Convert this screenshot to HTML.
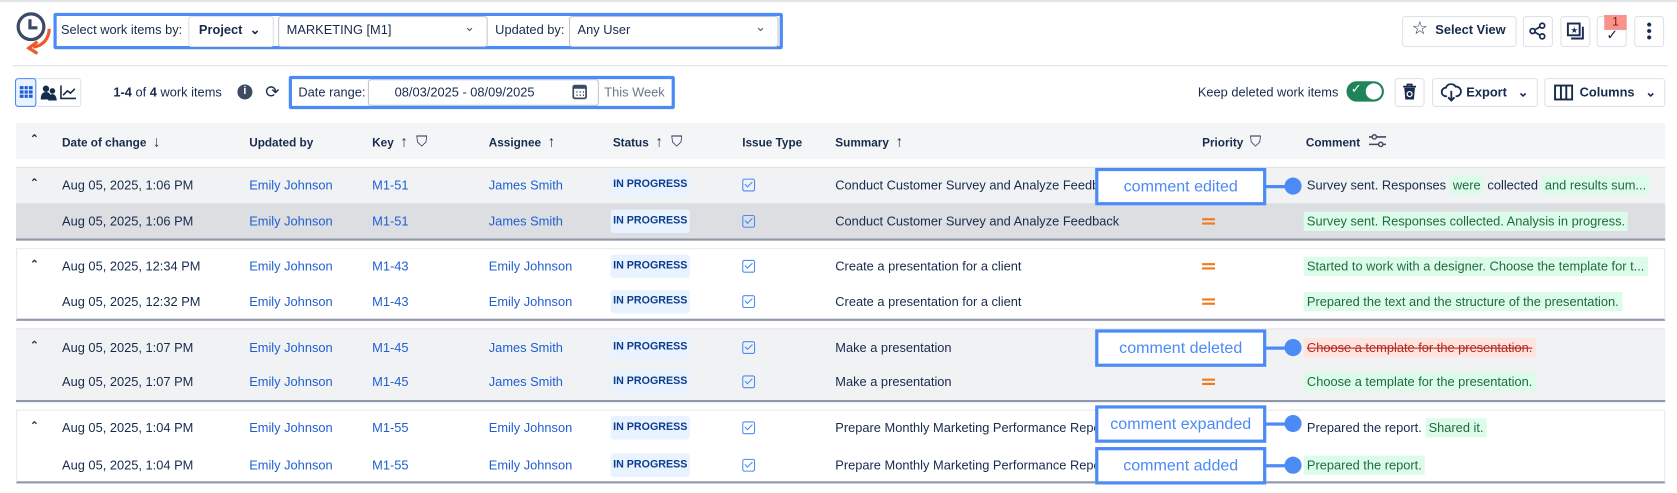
<!DOCTYPE html>
<html><head><meta charset="utf-8"><style>
*{box-sizing:border-box;margin:0;padding:0}
body{width:1677px;height:493px;background:#fff;font-family:"Liberation Sans",sans-serif;font-size:12px;color:#172b4d;position:relative;overflow:hidden}
#w{position:absolute;left:0;top:0;width:1568px;height:461px;transform:scale(1.0695);transform-origin:0 0}
.a{position:absolute;white-space:nowrap}
.btn{position:absolute;border:1px solid #dfe1e6;border-radius:3px;background:#fff}
.hdr{font-weight:bold;font-size:11px;color:#172b4d;line-height:16px}
.hdr span{font-size:14px;font-weight:normal;line-height:16px}
.lnk{color:#1f5fd1}
.st{position:absolute;background:#e9f2ff;color:#0c3d8c;font-weight:bold;font-size:10px;border-radius:3px;width:74px;height:22px;line-height:22px;text-align:center}
.cb{position:absolute;width:12px;height:12px;border:1.5px solid #4c8af5;border-radius:2px}
.cb:after{content:"";position:absolute;left:3px;top:0px;width:3px;height:6px;border:solid #4c8af5;border-width:0 1.5px 1.5px 0;transform:rotate(45deg)}
.pr{position:absolute;width:12px;height:6px;border-top:2px solid #f07a1c;border-bottom:2px solid #f07a1c}
.g{background:#dcfbea;color:#206b3e;padding:2px 3px}
.ann{position:absolute;left:1024px;width:160px;border:3px solid #4c8af5;background:#fff;color:#4c8af5;font-size:15px;text-align:center}
.ln{position:absolute;left:1183px;width:20px;height:3px;background:#4c8af5}
.dot{position:absolute;left:1201px;width:16px;height:16px;border-radius:50%;background:#4c8af5}
.chev{position:absolute;left:28px;font-size:10px;font-weight:bold;color:#333}
</style></head><body><div id="w">
<div class="a" style="left:0;top:0;width:1568px;height:2px;background:#e4e5e8"></div>
<svg class="a" style="left:13px;top:9px" width="36" height="46" viewBox="0 0 36 46"><circle cx="16" cy="16" r="12" fill="none" stroke="#3d4a63" stroke-width="3"/><path d="M15 9v8h7" fill="none" stroke="#3d4a63" stroke-width="3"/><path d="M33 18c0 9-6 16-15 17" fill="none" stroke="#ec5a2b" stroke-width="3"/><path d="M22 30l-8 6 8 5" fill="none" stroke="#ec5a2b" stroke-width="3"/></svg>
<div class="a" style="left:50px;top:12px;width:682px;height:34px;border:3px solid #4c8af5;border-radius:2px"></div>
<div class="a" style="left:57px;top:21px;font-size:12px">Select work items by:</div>
<div class="btn" style="left:176px;top:15px;width:80px;height:29px"></div>
<div class="a" style="left:186px;top:21px;font-weight:bold">Project &nbsp;⌄</div>
<div class="btn" style="left:260px;top:15px;width:196px;height:29px;border-color:#c1c7d0"></div>
<div class="a" style="left:268px;top:21px">MARKETING [M1]</div><div class="a" style="left:434px;top:18px;color:#555">⌄</div>
<div class="a" style="left:463px;top:21px">Updated by:</div>
<div class="btn" style="left:532px;top:15px;width:196px;height:29px;border-color:#c1c7d0"></div>
<div class="a" style="left:540px;top:21px">Any User</div><div class="a" style="left:706px;top:18px;color:#555">⌄</div>
<div class="btn" style="left:1311px;top:15px;width:107px;height:29px"></div>
<div class="a" style="left:1320px;top:17px;font-size:17px">☆</div>
<div class="a" style="left:1342px;top:21px;font-weight:bold">Select View</div>
<div class="btn" style="left:1424px;top:15px;width:28px;height:29px"></div>
<svg class="a" style="left:1429px;top:20px" width="18" height="18"><circle cx="13" cy="4" r="2.3" fill="none" stroke="#172b4d" stroke-width="1.6"/><circle cx="4" cy="9" r="2.3" fill="none" stroke="#172b4d" stroke-width="1.6"/><circle cx="13" cy="14" r="2.3" fill="none" stroke="#172b4d" stroke-width="1.6"/><path d="M6 8l5-3M6 10l5 3" stroke="#172b4d" stroke-width="1.6"/></svg>
<div class="btn" style="left:1459px;top:15px;width:28px;height:29px"></div>
<svg class="a" style="left:1464px;top:20px" width="18" height="18"><rect x="2" y="2" width="11" height="11" fill="none" stroke="#172b4d" stroke-width="1.8"/><path d="M5 16h11V5" fill="none" stroke="#172b4d" stroke-width="1.8"/><text x="4.5" y="11" font-size="8" fill="#172b4d">★</text></svg>
<div class="btn" style="left:1493px;top:15px;width:28px;height:29px"></div>
<div class="a" style="left:1500px;top:14px;width:21px;height:14px;background:#f8928a;color:#7a1a12;font-size:11px;text-align:center;line-height:14px">1</div>
<div class="a" style="left:1502px;top:25px;font-size:13px">✓</div>
<div class="btn" style="left:1528px;top:15px;width:28px;height:29px"></div>
<div class="a" style="left:1540px;top:20px;width:4px;height:18px;background:radial-gradient(circle,#172b4d 1.8px,transparent 2px) 0 0/4px 6px"></div>
<div class="a" style="left:12px;top:61px;width:1547px;height:1px;background:#dfe1e6"></div>
<div class="btn" style="left:14px;top:73px;width:62px;height:27px"></div>
<div class="a" style="left:14px;top:73px;width:20px;height:27px;border:1px solid #4c8af5;background:#e9f2ff;border-radius:3px"></div>
<svg class="a" style="left:18px;top:80px" width="13" height="12"><rect x=".5" y=".5" width="12" height="11" fill="#1f5fd1"/><path d="M4.5 0v12M8.5 0v12M0 4h13M0 8h13" stroke="#e9f2ff"/></svg>
<svg class="a" style="left:38px;top:79px" width="16" height="15"><circle cx="5" cy="4" r="3" fill="#172b4d"/><circle cx="11" cy="6" r="2.6" fill="#172b4d"/><path d="M0 14c0-5 2-7 5-7s5 2 5 7z" fill="#172b4d"/><path d="M7 15c0-4 2-6 4-6s4 2 4 6z" fill="#172b4d"/></svg>
<svg class="a" style="left:56px;top:79px" width="16" height="14"><path d="M1 1v12h14" fill="none" stroke="#172b4d" stroke-width="1.5"/><path d="M3 10l4-4 3 2 4-4" fill="none" stroke="#172b4d" stroke-width="1.5"/></svg>
<div class="a" style="left:106px;top:79px"><b>1-4</b> of <b>4</b> work items</div>
<div class="a" style="left:222px;top:79px;width:14px;height:14px;border-radius:50%;background:#3d4a63;color:#fff;font-size:10px;text-align:center;line-height:14px;font-weight:bold">i</div>
<div class="a" style="left:248px;top:76px;font-size:16px">⟳</div>
<div class="a" style="left:270px;top:71px;width:361px;height:31px;border:3px solid #4c8af5;border-radius:2px"></div>
<div class="a" style="left:279px;top:79px">Date range:</div>
<div class="btn" style="left:344px;top:74px;width:216px;height:25px;border-color:#c1c7d0"></div>
<div class="a" style="left:369px;top:79px">08/03/2025 - 08/09/2025</div>
<svg class="a" style="left:535px;top:78px" width="14" height="15"><rect x="1" y="2" width="12" height="12" rx="1.5" fill="none" stroke="#3d4a63" stroke-width="1.6"/><rect x="1" y="2" width="12" height="3" fill="#3d4a63"/><path d="M4 8h1M7 8h1M10 8h1M4 11h1M7 11h1M10 11h1" stroke="#3d4a63" stroke-width="1.5"/></svg>
<div class="a" style="left:565px;top:79px;color:#6b778c">This Week</div>
<div class="a" style="left:1120px;top:79px">Keep deleted work items</div>
<div class="a" style="left:1259px;top:76px;width:35px;height:19px;border-radius:10px;background:#1f845a"></div>
<div class="a" style="left:1277px;top:78px;width:15px;height:15px;border-radius:50%;background:#fff"></div>
<div class="a" style="left:1263px;top:76px;color:#fff;font-size:12px">✓</div>
<div class="btn" style="left:1304px;top:73px;width:28px;height:27px"></div>
<svg class="a" style="left:1311px;top:78px" width="14" height="16"><path d="M1 3h12M5 3V1h4v2" stroke="#172b4d" stroke-width="1.6" fill="none"/><path d="M2 4h10l-1 11H3z" fill="#172b4d"/><circle cx="7" cy="10" r="2.3" fill="none" stroke="#fff" stroke-width="1.2"/></svg>
<div class="btn" style="left:1339px;top:73px;width:99px;height:27px"></div>
<svg class="a" style="left:1347px;top:78px" width="20" height="17"><path d="M6 12H5a4 4 0 0 1 0-8 5 5 0 0 1 9-1 4 4 0 0 1 1 9h-1" fill="none" stroke="#172b4d" stroke-width="1.7"/><path d="M10 7v9M7 13l3 3 3-3" fill="none" stroke="#172b4d" stroke-width="1.7"/></svg>
<div class="a" style="left:1371px;top:79px;font-weight:bold">Export &nbsp;&nbsp;⌄</div>
<div class="btn" style="left:1444px;top:73px;width:113px;height:27px"></div>
<svg class="a" style="left:1453px;top:79px" width="18" height="15"><rect x="1" y="1" width="16" height="13" fill="none" stroke="#172b4d" stroke-width="1.8"/><path d="M6.5 1v13M11.5 1v13" stroke="#172b4d" stroke-width="1.8"/></svg>
<div class="a" style="left:1477px;top:79px;font-weight:bold">Columns &nbsp;&nbsp;⌄</div>
<div class="a" style="left:15px;top:115px;width:1542px;height:34px;background:#f4f5f7"></div>
<div class="a hdr" style="left:28px;top:123px;font-size:10px">⌃</div>
<div class="a hdr" style="left:58px;top:124px">Date of change &nbsp;<span>↓</span></div>
<div class="a hdr" style="left:233px;top:126px">Updated by</div>
<div class="a hdr" style="left:348px;top:124px">Key &nbsp;<span>↑ &nbsp;⛉</span></div>
<div class="a hdr" style="left:457px;top:124px">Assignee &nbsp;<span>↑</span></div>
<div class="a hdr" style="left:573px;top:124px">Status &nbsp;<span>↑ &nbsp;⛉</span></div>
<div class="a hdr" style="left:694px;top:126px">Issue Type</div>
<div class="a hdr" style="left:781px;top:124px">Summary &nbsp;<span>↑</span></div>
<div class="a hdr" style="left:1124px;top:124px">Priority &nbsp;<span>⛉</span></div>
<div class="a hdr" style="left:1221px;top:126px">Comment</div>
<svg class="a" style="left:1280px;top:125px" width="16" height="13"><path d="M0 3h16M0 10h16" stroke="#3d4a63" stroke-width="1.5"/><circle cx="5" cy="3" r="2" fill="#f4f5f7" stroke="#3d4a63" stroke-width="1.3"/><circle cx="11" cy="10" r="2" fill="#f4f5f7" stroke="#3d4a63" stroke-width="1.3"/></svg>
<div class="a" style="left:15px;top:156px;width:1542px;height:69px;background:#f1f2f4;border-top:1px solid #e4e5e8;border-bottom:2px solid #8f97a8"></div>
<div class="a" style="left:15px;top:190px;width:1542px;height:33px;background:#dcdee2"></div>
<div class="a" style="left:15px;top:232px;width:1542px;height:68px;background:#fff;border:1px solid #e8e9ec;border-bottom:2px solid #8f97a8"></div>
<div class="a" style="left:15px;top:307px;width:1542px;height:69px;background:#f1f2f4;border-top:1px solid #e4e5e8;border-bottom:2px solid #8f97a8"></div>
<div class="a" style="left:15px;top:383px;width:1542px;height:69px;background:#fff;border:1px solid #e8e9ec;border-bottom:2px solid #8f97a8"></div>

<div class="chev" style="top:166px">⌃</div>
<div class="a" style="left:58px;top:166px">Aug 05, 2025, 1:06 PM</div><div class="a lnk" style="left:233px;top:166px">Emily Johnson</div><div class="a lnk" style="left:348px;top:166px">M1-51</div><div class="a lnk" style="left:457px;top:166px">James Smith</div><div class="st" style="left:571px;top:162px">IN PROGRESS</div><div class="cb" style="left:694px;top:167px"></div><div class="a" style="left:781px;top:166px">Conduct Customer Survey and Analyze Feedback</div>
<div class="a" style="left:1222px;top:166px">Survey sent. Responses <span class="g">were</span> collected <span class="g">and results sum...</span></div>
<div class="a" style="left:58px;top:200px">Aug 05, 2025, 1:06 PM</div><div class="a lnk" style="left:233px;top:200px">Emily Johnson</div><div class="a lnk" style="left:348px;top:200px">M1-51</div><div class="a lnk" style="left:457px;top:200px">James Smith</div><div class="st" style="left:571px;top:196px">IN PROGRESS</div><div class="cb" style="left:694px;top:201px"></div><div class="a" style="left:781px;top:200px">Conduct Customer Survey and Analyze Feedback</div><div class="pr" style="left:1124px;top:204px"></div>
<div class="a" style="left:1219px;top:200px"><span class="g">Survey sent. Responses collected. Analysis in progress.</span></div>
<div class="chev" style="top:242px">⌃</div>
<div class="a" style="left:58px;top:242px">Aug 05, 2025, 12:34 PM</div><div class="a lnk" style="left:233px;top:242px">Emily Johnson</div><div class="a lnk" style="left:348px;top:242px">M1-43</div><div class="a lnk" style="left:457px;top:242px">Emily Johnson</div><div class="st" style="left:571px;top:238px">IN PROGRESS</div><div class="cb" style="left:694px;top:243px"></div><div class="a" style="left:781px;top:242px">Create a presentation for a client</div><div class="pr" style="left:1124px;top:246px"></div>
<div class="a" style="left:1219px;top:242px"><span class="g">Started to work with a designer. Choose the template for t...</span></div>
<div class="a" style="left:58px;top:275px">Aug 05, 2025, 12:32 PM</div><div class="a lnk" style="left:233px;top:275px">Emily Johnson</div><div class="a lnk" style="left:348px;top:275px">M1-43</div><div class="a lnk" style="left:457px;top:275px">Emily Johnson</div><div class="st" style="left:571px;top:271px">IN PROGRESS</div><div class="cb" style="left:694px;top:276px"></div><div class="a" style="left:781px;top:275px">Create a presentation for a client</div><div class="pr" style="left:1124px;top:279px"></div>
<div class="a" style="left:1219px;top:275px"><span class="g">Prepared the text and the structure of the presentation.</span></div>
<div class="chev" style="top:318px">⌃</div>
<div class="a" style="left:58px;top:318px">Aug 05, 2025, 1:07 PM</div><div class="a lnk" style="left:233px;top:318px">Emily Johnson</div><div class="a lnk" style="left:348px;top:318px">M1-45</div><div class="a lnk" style="left:457px;top:318px">James Smith</div><div class="st" style="left:571px;top:314px">IN PROGRESS</div><div class="cb" style="left:694px;top:319px"></div><div class="a" style="left:781px;top:318px">Make a presentation</div>
<div class="a" style="left:1219px;top:318px"><span style="background:#ffe4e0;color:#b3261e;text-decoration:line-through;padding:2px 3px">Choose a template for the presentation.</span></div>
<div class="a" style="left:58px;top:350px">Aug 05, 2025, 1:07 PM</div><div class="a lnk" style="left:233px;top:350px">Emily Johnson</div><div class="a lnk" style="left:348px;top:350px">M1-45</div><div class="a lnk" style="left:457px;top:350px">James Smith</div><div class="st" style="left:571px;top:346px">IN PROGRESS</div><div class="cb" style="left:694px;top:351px"></div><div class="a" style="left:781px;top:350px">Make a presentation</div><div class="pr" style="left:1124px;top:354px"></div>
<div class="a" style="left:1219px;top:350px"><span class="g">Choose a template for the presentation.</span></div>
<div class="chev" style="top:393px">⌃</div>
<div class="a" style="left:58px;top:393px">Aug 05, 2025, 1:04 PM</div><div class="a lnk" style="left:233px;top:393px">Emily Johnson</div><div class="a lnk" style="left:348px;top:393px">M1-55</div><div class="a lnk" style="left:457px;top:393px">Emily Johnson</div><div class="st" style="left:571px;top:389px">IN PROGRESS</div><div class="cb" style="left:694px;top:394px"></div><div class="a" style="left:781px;top:393px">Prepare Monthly Marketing Performance Report</div>
<div class="a" style="left:1222px;top:393px">Prepared the report. <span class="g">Shared it.</span></div>
<div class="a" style="left:58px;top:428px">Aug 05, 2025, 1:04 PM</div><div class="a lnk" style="left:233px;top:428px">Emily Johnson</div><div class="a lnk" style="left:348px;top:428px">M1-55</div><div class="a lnk" style="left:457px;top:428px">Emily Johnson</div><div class="st" style="left:571px;top:424px">IN PROGRESS</div><div class="cb" style="left:694px;top:429px"></div><div class="a" style="left:781px;top:428px">Prepare Monthly Marketing Performance Report</div>
<div class="a" style="left:1219px;top:428px"><span class="g">Prepared the report.</span></div>

<div class="ann" style="top:157px;height:35px;line-height:29px">comment edited</div><div class="ln" style="top:173px"></div><div class="dot" style="top:166px"></div>
<div class="ann" style="top:308px;height:35px;line-height:29px">comment deleted</div><div class="ln" style="top:324px"></div><div class="dot" style="top:317px"></div>
<div class="ann" style="top:379px;height:35px;line-height:29px">comment expanded</div><div class="ln" style="top:395px"></div><div class="dot" style="top:388px"></div>
<div class="ann" style="top:418px;height:35px;line-height:29px">comment added</div><div class="ln" style="top:434px"></div><div class="dot" style="top:427px"></div>
</div></body></html>
